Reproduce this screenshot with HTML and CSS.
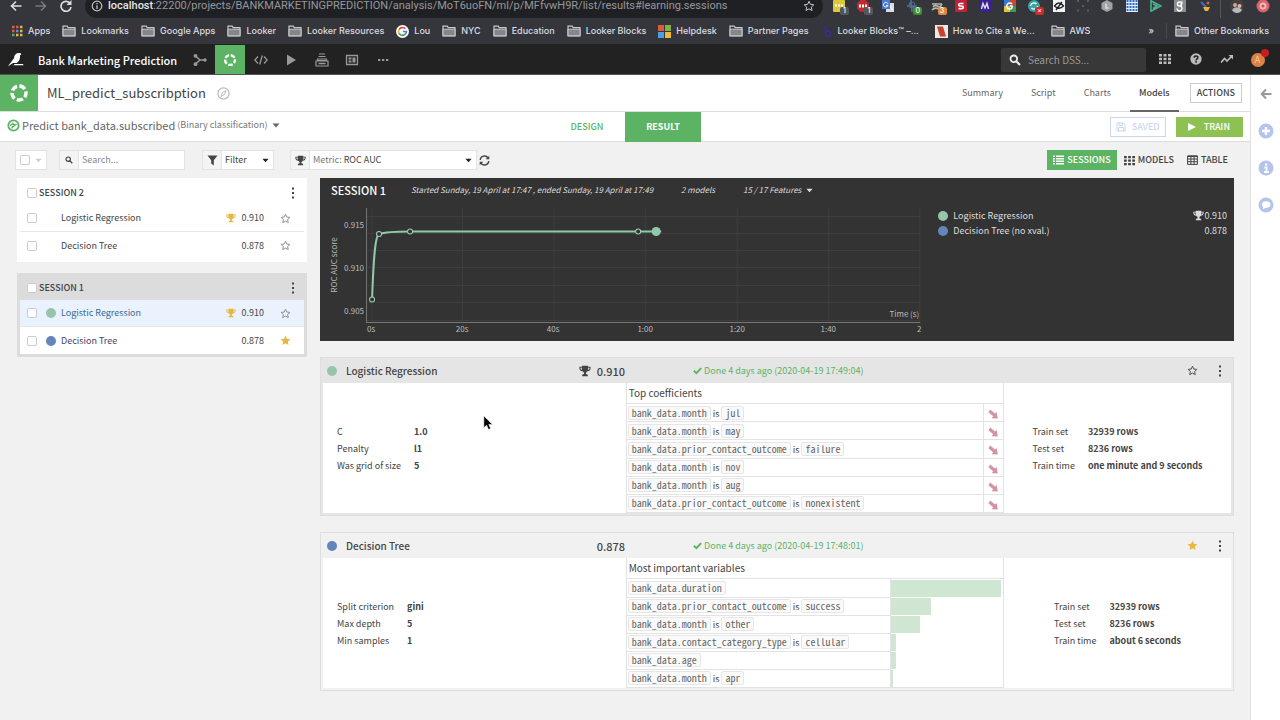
FILE: index.html
```html
<!DOCTYPE html>
<html lang="en">
  <head>
    <meta charset="UTF-8" />
    <meta name="viewport" content="width=device-width, initial-scale=1.0" />
    <title>Bank Marketing Prediction</title>

    <link rel="stylesheet" href="styles.css">
  </head>
  <body>
    <svg class="sprite" aria-hidden="true">
      <symbol id="folder" viewBox="0 0 14 12">
        <path d="M1 2.2V10.8H13V2.6H6.2L5.2 1.2H1Z" fill="none" stroke="#c9cacd" stroke-width="1.2" />
        <path d="M1 4.2H13V10.8H1Z" fill="#85868a" stroke="#c9cacd" stroke-width="1" />
      </symbol>
      <symbol id="ring" viewBox="0 0 20 20">
        <circle cx="10" cy="10" r="7" fill="none" stroke="currentColor" stroke-width="3.4" stroke-dasharray="6.4 2.4" stroke-dashoffset="2" />
      </symbol>
      <symbol id="trophy" viewBox="0 0 12 12">
        <path d="M3 .8h6v1h2.600v1.400c0 1.800-1.300 2.900-3.100 3.100-.5.7-1 1.100-1.500 1.300v1.300c1.100.1 1.900.7 1.900 1.500v.8H3.100v-.8c0-.8.800-1.400 1.900-1.500V7.600c-.5-.2-1-.6-1.500-1.300C1.700 6.100.4 5 .4 3.200V1.800H3zM3 2.800H1.500v.4c0 .8.5 1.500 1.400 1.800-.1-.6 0-1.500.1-2.200zM9 2.800c.1.7.2 1.600.1 2.200.9-.3 1.400-1 1.400-1.800v-.4z" fill="currentColor" fill-rule="evenodd" />
      </symbol>
      <symbol id="star" viewBox="0 0 12 12">
        <path d="M6 1.300 7.400 4.400 10.800 4.800 8.300 7.100 9 10.500 6 8.800 3 10.500 3.700 7.100 1.200 4.800 4.600 4.400Z" fill="none" stroke="currentColor" stroke-linejoin="round" />
      </symbol>
      <symbol id="star-full" viewBox="0 0 12 12">
        <path d="M6 .8 7.600 4.200 11.300 4.600 8.600 7.200 9.300 10.900 6 9.100 2.700 10.900 3.400 7.200.7 4.600 4.400 4.200Z" fill="currentColor" />
      </symbol>
      <symbol id="dots" viewBox="0 0 4 12">
        <path d="M1 .5h2v2H1zM1 5h2v2H1zM1 9.500h2v2H1z" fill="currentColor" />
      </symbol>
      <symbol id="caret" viewBox="0 0 8 5">
        <path d="M.5.5h7L4 4.500z" fill="currentColor" />
      </symbol>
      <symbol id="search" viewBox="0 0 12 12">
        <circle cx="4.800" cy="4.800" r="3.300" fill="none" stroke="currentColor" stroke-width="1.800" />
        <path d="M7.300 7.300 11 11" stroke="currentColor" stroke-width="2" />
      </symbol>
      <symbol id="grid" viewBox="0 0 12 12">
        <path d="M0 1h3v2.500H0zM4.500 1h3v2.500h-3zM9 1h3v2.500H9zM0 4.800h3v2.500H0zM4.500 4.800h3v2.500h-3zM9 4.800h3v2.500H9zM0 8.600h3v2.500H0zM4.500 8.600h3v2.500h-3zM9 8.600h3v2.500H9z" fill="currentColor" />
      </symbol>
      <symbol id="check" viewBox="0 0 10 10">
        <path d="M1 5.300 3.800 8 9 2.300" fill="none" stroke="currentColor" stroke-width="2.200" />
      </symbol>
      <symbol id="down" viewBox="0 0 12 12">
        <path d="M3.200 1.500 8 5.600 9.600 3.900 10.800 10.400 4.600 10.200 6.200 8.300 1.400 4.200Z" fill="currentColor" />
      </symbol>
    </svg>

    <div class="browser">
      <div class="toolbar">
        <button class="nav-btn" aria-label="Back"><svg width="12" height="12" viewBox="0 0 12 12"><path d="M11.500 6H1.500M6 1.500 1.500 6 6 10.500" fill="none" stroke="#dcdde0" stroke-width="1.600" /></svg></button>
        <button class="nav-btn" aria-label="Forward"><svg width="12" height="12" viewBox="0 0 12 12"><path d="M.5 6h10M6 1.500 10.500 6 6 10.500" fill="none" stroke="#77787c" stroke-width="1.600" /></svg></button>
        <button class="nav-btn" aria-label="Reload"><svg width="12" height="12" viewBox="0 0 12 12"><path d="M10.200 3.500A5 5 0 1 0 11 7" fill="none" stroke="#dcdde0" stroke-width="1.700" /><path d="M11.500 0v5h-5z" fill="#dcdde0" /></svg></button>
        <div class="address">
          <svg width="12" height="12" viewBox="0 0 12 12"><circle cx="6" cy="6" r="4.800" fill="none" stroke="#bfc0c3" stroke-width="1.200" /><path d="M6 3v1.300M6 5.200V9" stroke="#bfc0c3" stroke-width="1.300" /></svg>
          <span class="url"><b>localhost</b>:22200/projects/BANKMARKETINGPREDICTION/analysis/MoT6uoFN/ml/p/MFfvwH9R/list/results#learning.sessions</span>
          <svg class="fav" width="12" height="12"><use href="#star" /></svg>
        </div>
        <div class="extensions">
          <span class="ext"><svg width="12" height="12"><rect width="12" height="12" rx="1" fill="#dcc83c" /><path d="M2 5.500h8" stroke="#fff" stroke-width="2" stroke-dasharray="2 1" /></svg><i class="badge">1</i></span>
          <span class="ext"><svg width="12" height="12"><path d="M3.500 0h5L12 3.500v5L8.500 12h-5L0 8.500v-5z" fill="#c32a2e" /><path d="M2 6h8" stroke="#fff" stroke-width="3" stroke-dasharray="2 1" /></svg><i class="badge">1</i></span>
          <span class="ext"><svg width="12" height="12"><rect x="4" y="3" width="8" height="9" fill="#d9dce2" /><rect width="8" height="9" fill="#4a7bd0" /><path d="M6 3.800A2.300 2.300 0 1 0 6 5.500H4.200M8 6l3 4" fill="none" stroke="#fff" /></svg></span>
          <span class="ext"><svg width="12" height="12"><path d="M5 0 6 12M1 6h10M3 3l6 5" stroke="#4c6c98" stroke-width="1.600" /><circle cx="6" cy="5" r="3" fill="none" stroke="#4c6c98" /></svg><i class="badge badge-green">0</i></span>
          <span class="ext"><svg width="12" height="12"><path d="M1 4h10M2 7c3-5 6 4 9-3M1 10c4-4 5 0 9-2" fill="none" stroke="#b6b6ac" stroke-width="1.700" /></svg><i class="badge badge-orange">3</i></span>
          <span class="ext"><svg width="12" height="12"><rect width="12" height="12" rx="1" fill="#c12135" /><path d="M8.500 3.500H5a1.200 1.200 0 0 0 0 2.500h2a1.300 1.300 0 0 1 0 2.600H3.500" fill="none" stroke="#fff" stroke-width="1.700" /></svg></span>
          <span class="ext"><svg width="12" height="12"><rect width="12" height="12" fill="#39228c" /><path d="M2.500 9 4 3.500 6 8l2-4.500L9.500 9" fill="none" stroke="#dcd7f5" stroke-width="1.500" /></svg></span>
          <span class="ext"><svg width="12" height="12"><rect width="6" height="6" fill="#3875d7" /><rect x="6" width="6" height="6" fill="#c8453a" /><rect y="6" width="6" height="6" fill="#e6c33c" /><rect x="6" y="6" width="6" height="6" fill="#3b9b52" /><path d="M8 4a3 3 0 1 0 0 4V6H6" fill="none" stroke="#fff" stroke-width="1.500" /></svg></span>
          <span class="ext"><svg width="12" height="12"><circle cx="6" cy="6" r="6" fill="#38a3a5" /><path d="M2.500 6a3.500 3.500 0 0 1 6-2M9.500 6a3.500 3.500 0 0 1-6 2" fill="none" stroke="#e8f5f5" stroke-width="1.500" /></svg><i class="badge badge-red">×</i></span>
          <span class="ext"><svg width="12" height="12"><rect width="12" height="12" fill="#f2f2f2" /><path d="M1.500 6c3-4 6-4 9 0-3 3-6 3-9 0zM3 10l6-8" fill="none" stroke="#222" stroke-width="1.300" /></svg></span>
          <span class="ext"><svg width="12" height="12"><path d="M0 1h2M10 1h2M0 10.500h2M10 10.500h2M5 6h2" stroke="#5c5d61" stroke-width="2" /></svg></span>
          <span class="ext"><svg width="12" height="12"><path d="M6 0 11.500 3v6L6 12 .5 9V3z" fill="#a2a3a6" /><path d="M5 3.500v4.500h2.500" fill="none" stroke="#ddd" stroke-width="1.500" /></svg></span>
          <span class="ext"><svg width="12" height="12"><rect width="12" height="12" fill="#e4ebf7" /><path d="M1.500 0v12M4.500 0v12M7.500 0v12M10.500 0v12" stroke="#2f6fc6" stroke-width="2" stroke-dasharray="2 1" /></svg></span>
          <span class="ext"><svg width="12" height="12"><path d="M1 .8v10.400L11 6zM3 3.800 7 6 3 8.500" fill="none" stroke="#4db693" stroke-width="1.500" /></svg></span>
          <span class="ext"><svg width="12" height="12"><rect width="12" height="12" fill="#8b8c8e" /><circle cx="5.500" cy="4" r="2" fill="none" stroke="#fff" stroke-width="1.400" /><path d="M8 1.500 7 6.500a2.500 2.500 0 1 1-4 2" fill="none" stroke="#fff" stroke-width="1.400" /></svg></span>
          <span class="ext"><svg width="12" height="12"><path d="M2 2 7 7" stroke="#3a6fc4" stroke-width="2" /><path d="M4 7h7l-2 4H6z" fill="#e9b33b" /><circle cx="9" cy="3" r="1.500" fill="#d95b43" /></svg></span>
        </div>
        <div class="people">
          <svg width="14" height="14" viewBox="0 0 14 14"><circle cx="7" cy="7" r="7" fill="#463e3d" /><circle cx="5" cy="6" r="2" fill="#cfa997" /><circle cx="9.500" cy="7" r="2" fill="#d5b7a9" /><path d="M2 11c3-4 7-3 10 0-2 4-8 4-10 0z" fill="#b9b9bd" /></svg>
          <svg width="14" height="14" viewBox="0 0 14 14"><circle cx="7" cy="7" r="6.500" fill="#d9646b" /><circle cx="7" cy="7" r="3.500" fill="#f0b9b8" /><circle cx="7" cy="7" r="1.500" fill="#c94f58" /></svg>
        </div>
      </div>

      <div class="bookmarks">
        <a href="#"><svg width="12" height="12" viewBox="0 0 12 12"><path d="M1 2h2.500M1 6h2.500" stroke="#e15b4b" stroke-width="2.500" /><path d="M5 2h2.500" stroke="#e15b4b" stroke-width="2.500" /><path d="M9 2h2.500M9 6h2.500M5 10h2.500M9 10h2.500" stroke="#e1b64b" stroke-width="2.500" /><path d="M5 6h2.500" stroke="#5a8ede" stroke-width="2.500" /><path d="M1 10h2.500" stroke="#58a862" stroke-width="2.500" /></svg>Apps</a>
        <a href="#"><svg width="14" height="12"><use href="#folder" /></svg>Lookmarks</a>
        <a href="#"><svg width="14" height="12"><use href="#folder" /></svg>Google Apps</a>
        <a href="#"><svg width="14" height="12"><use href="#folder" /></svg>Looker</a>
        <a href="#"><svg width="14" height="12"><use href="#folder" /></svg>Looker Resources</a>
        <a href="#"><svg width="13" height="13" viewBox="0 0 13 13"><circle cx="6.500" cy="6.500" r="6.500" fill="#fff" /><path d="M9.300 3.700A4 4 0 0 0 3 4.600" fill="none" stroke="#de4b3c" stroke-width="1.600" /><path d="M3 4.600a4 4 0 0 0 0 3.800" fill="none" stroke="#f0b82c" stroke-width="1.600" /><path d="M3 8.400a4 4 0 0 0 6.200.8" fill="none" stroke="#3a9c55" stroke-width="1.600" /><path d="M9.200 9.200A4 4 0 0 0 10.400 6.500H6.800" fill="none" stroke="#4580e6" stroke-width="1.600" /></svg>Lou</a>
        <a href="#"><svg width="14" height="12"><use href="#folder" /></svg>NYC</a>
        <a href="#"><svg width="14" height="12"><use href="#folder" /></svg>Education</a>
        <a href="#"><svg width="14" height="12"><use href="#folder" /></svg>Looker Blocks</a>
        <a href="#"><svg width="13" height="13" viewBox="0 0 13 13"><path d="M0 0h6v6H0z" fill="#e0593a" /><path d="M7 0h6v6H7z" fill="#82b440" /><path d="M0 7h6v6H0z" fill="#4a9fdc" /><path d="M7 7h6v6H7z" fill="#edb93f" /></svg>Helpdesk</a>
        <a href="#"><svg width="14" height="12"><use href="#folder" /></svg>Partner Pages</a>
        <a href="#" class="clipped"><svg width="12" height="12" viewBox="0 0 12 12"><circle cx="7" cy="8.500" r="2.600" fill="none" stroke="#3d2c92" stroke-width="1.500" /><circle cx="4" cy="4" r="1.500" fill="none" stroke="#3d2c92" /><circle cx="2" cy="1.200" r="1" fill="#3d2c92" /></svg>Looker Blocks™ –...</a>
        <a href="#" class="clipped"><svg width="13" height="13" viewBox="0 0 13 13"><rect width="13" height="13" fill="#efe9e4" /><path d="M2 1.500h6l3 10H5z" fill="#c5432f" /></svg>How to Cite a We...</a>
        <a href="#"><svg width="14" height="12"><use href="#folder" /></svg>AWS</a>
        <a href="#" class="more">»</a>
        <a href="#" class="other"><svg width="14" height="12"><use href="#folder" /></svg>Other Bookmarks</a>
      </div>
    </div>

    <header class="navbar">
      <svg width="18" height="16" viewBox="0 0 18 16"><path d="M.8 14.500 7 6.200C7.200 3 9 1 12 1c1.300 0 2 .5 2.400 1.200L13 3.600c.4 3.200-.8 5.800-3.200 7.400H6zM7.500 12h8.500l.5 1.200H6.500z" fill="#fff" /></svg>
      <a href="#" class="project">Bank Marketing Prediction</a>
      <nav class="sections">
        <button aria-label="Flow"><svg width="14" height="14" viewBox="0 0 14 14"><path d="M2.500 3 7 7H12M2.500 11 7 7" fill="none" stroke="currentColor" stroke-width="1.600" /><circle cx="2.500" cy="2.800" r="1.900" fill="currentColor" /><circle cx="2.500" cy="11.200" r="1.900" fill="currentColor" /><circle cx="12" cy="7" r="1.700" fill="currentColor" /></svg></button>
        <button class="current" aria-label="Lab"><svg width="14" height="14"><use href="#ring" /></svg></button>
        <button aria-label="Code"><svg width="14" height="14" viewBox="0 0 14 14"><path d="M4 3.500.8 7 4 10.500M10 3.500 13.200 7 10 10.500M8.300 2.500 5.700 11.500" fill="none" stroke="currentColor" stroke-width="1.300" /></svg></button>
        <button aria-label="Run"><svg width="14" height="14" viewBox="0 0 14 14"><path d="M3 1.500v11L12 7z" fill="currentColor" /></svg></button>
        <button aria-label="Automation"><svg width="14" height="14" viewBox="0 0 14 14"><path d="M4 1h6M3.500 3.500h7M2.500 6h9v1.500h-9zM1 8h12v5H1z" fill="none" stroke="currentColor" stroke-width="1.200" /><path d="M3.500 10.500h7" stroke="currentColor" stroke-width="1.500" /></svg></button>
        <button aria-label="Dashboards"><svg width="14" height="14" viewBox="0 0 14 14"><path d="M1.500 2.500h11v9h-11z" fill="none" stroke="currentColor" stroke-width="1.300" /><path d="M3.500 4.500h3v2h-3zM3.500 7.500h3v2h-3zM7.500 4.500h3v5h-3z" fill="currentColor" /></svg></button>
        <button aria-label="More"><svg width="14" height="14" viewBox="0 0 14 14"><path d="M2 6h2.300v2H2zM6 6h2.300v2H6zM10 6h2.300v2H10z" fill="currentColor" /></svg></button>
      </nav>
      <label class="dss-search"><svg width="12" height="12"><use href="#search" /></svg><input type="search" placeholder="Search DSS..." /></label>
      <div class="account">
        <button aria-label="Applications"><svg width="12" height="12"><use href="#grid" /></svg></button>
        <button aria-label="Help"><svg width="12" height="12" viewBox="0 0 12 12"><circle cx="6" cy="6" r="5.700" fill="currentColor" /><path d="M4.200 4.700C4.200 2.500 7.900 2.500 7.900 4.600 7.900 6 6.100 5.900 6.100 7.400" fill="none" stroke="#222" stroke-width="1.500" /><path d="M5.300 8.300h1.600v1.500H5.300z" fill="#222" /></svg></button>
        <button aria-label="Activity"><svg width="14" height="12" viewBox="0 0 14 12"><path d="M1 9.500 4.500 5.500 7 8 11.500 3.500" fill="none" stroke="currentColor" stroke-width="1.700" /><path d="M8.500 2H13v4.500z" fill="currentColor" /></svg></button>
        <button class="avatar" aria-label="Profile"><span>A</span></button>
      </div>
    </header>

    <div class="page">
      <main>
        <div class="titlebar">
          <span class="analysis-icon"><svg width="20" height="20"><use href="#ring" /></svg></span>
          <h1>ML_predict_subscribption</h1>
          <svg width="13" height="13" viewBox="0 0 13 13"><circle cx="6.500" cy="6.500" r="5.600" fill="none" stroke="#bbb" stroke-width="1.200" /><path d="M9 3.500 7.500 7.500 4 9.500 5.500 5.500z" fill="none" stroke="#bbb" /></svg>
          <nav class="tabs">
            <a href="#">Summary</a>
            <a href="#">Script</a>
            <a href="#">Charts</a>
            <a href="#" class="active">Models</a>
          </nav>
          <button class="actions">ACTIONS</button>
        </div>

        <div class="taskbar">
          <button class="task">
            <svg width="13" height="13" viewBox="0 0 13 13"><circle cx="6.500" cy="6.500" r="5.200" fill="none" stroke="#5cb364" stroke-width="1.800" /><path d="M3.500 7a2 2 0 0 1 3-1.500c1 .8 2 .5 3-.5M5 9.500c0-2 1-2.500 2.500-2.500M6 3.500c-.3 1.500.5 2 1.500 2" fill="none" stroke="#5cb364" stroke-width="1.300" /></svg>
            Predict bank_data.subscribed <small>(Binary classification)</small>
            <svg class="task-caret" width="8" height="5"><use href="#caret" /></svg>
          </button>
          <div class="switch">
            <button>DESIGN</button>
            <button class="active">RESULT</button>
          </div>
          <div class="task-buttons">
            <button class="saved" disabled><svg width="10" height="10" viewBox="0 0 10 10"><path d="M1 1h6.500L9 2.500V9H1zM3 1v2.500h3.500V1M2.500 9V5.500h5V9" fill="none" stroke="currentColor" /></svg>SAVED</button>
            <button class="train"><svg width="8" height="8" viewBox="0 0 8 8"><path d="M0 0v8l8-4z" fill="currentColor" /></svg>TRAIN</button>
          </div>
        </div>

        <div class="content">
          <div class="filters">
            <label class="box select-all"><input type="checkbox" aria-label="Select all" /><svg width="7" height="5"><use href="#caret" /></svg></label>
            <label class="box find"><span class="addon"><svg width="8" height="8"><use href="#search" /></svg></span><input type="search" placeholder="Search..." /></label>
            <button class="box filter"><span class="addon"><svg width="11" height="11" viewBox="0 0 11 11"><path d="M.5.500h10L6.800 5.200v5.300L4.200 8.500V5.200z" fill="#444" /></svg></span>Filter<svg class="end" width="7" height="5"><use href="#caret" /></svg></button>
            <label class="box metric"><span class="addon"><svg width="11" height="11"><use href="#trophy" /></svg></span>
              <span class="metric-name">Metric:</span>
              <select aria-label="Metric"><option>ROC AUC</option><option>Accuracy</option></select>
              <svg class="end" width="7" height="5"><use href="#caret" /></svg></label>
            <button class="refresh" aria-label="Refresh"><svg width="11" height="11" viewBox="0 0 11 11"><path d="M1.200 4.800a4.300 4.300 0 0 1 7.800-2M9.800 6.200a4.300 4.300 0 0 1-7.800 2" fill="none" stroke="#444" stroke-width="1.400" /><path d="M10.300.7v3.600H6.700zM.7 10.300V6.700h3.600z" fill="#444" /></svg></button>
            <div class="views">
              <button class="active"><svg width="11" height="10" viewBox="0 0 11 10"><path d="M0 1.200h2M0 3.700h2M0 6.200h2M0 8.700h2M3 1.200h8M3 3.700h8M3 6.200h8M3 8.700h8" stroke="currentColor" stroke-width="1.500" /></svg>SESSIONS</button>
              <button><svg width="11" height="11"><use href="#grid" /></svg>MODELS</button>
              <button><svg width="11" height="10" viewBox="0 0 11 10"><path d="M.600 1h9.800v8.400H.600zM.600 4h9.800M.600 6.700h9.800M3.900 1v8.400M7.100 1v8.400" fill="none" stroke="currentColor" /><path d="M.600.500h9.800v1.500H.600z" fill="currentColor" /></svg>TABLE</button>
            </div>
          </div>

          <div class="columns">
            <aside class="sessions">
              <section class="session">
                <div class="session-head"><label><input type="checkbox" />SESSION 2</label><svg width="4" height="12"><use href="#dots" /></svg></div>
                <div class="row"><input type="checkbox" aria-label="Select Logistic Regression" /><i class="dot none"></i><a href="#">Logistic Regression</a><svg class="gold" width="10" height="10"><use href="#trophy" /></svg><span>0.910</span><svg class="fave" width="11" height="11"><use href="#star" /></svg></div>
                <div class="row"><input type="checkbox" aria-label="Select Decision Tree" /><i class="dot none"></i><a href="#">Decision Tree</a><span>0.878</span><svg class="fave" width="11" height="11"><use href="#star" /></svg></div>
              </section>
              <section class="session open">
                <div class="session-head"><label><input type="checkbox" />SESSION 1</label><svg width="4" height="12"><use href="#dots" /></svg></div>
                <div class="row selected"><input type="checkbox" aria-label="Select Logistic Regression" /><i class="dot"></i><a href="#">Logistic Regression</a><svg class="gold" width="10" height="10"><use href="#trophy" /></svg><span>0.910</span><svg class="fave" width="11" height="11"><use href="#star" /></svg></div>
                <div class="row"><input type="checkbox" aria-label="Select Decision Tree" /><i class="dot blue"></i><a href="#">Decision Tree</a><span>0.878</span><svg class="fave gold" width="11" height="11"><use href="#star-full" /></svg></div>
              </section>
            </aside>

            <div class="results">
              <section class="summary">
                <div class="summary-head">
                  <h2>SESSION 1</h2>
                  <em class="dates">Started Sunday, 19 April at 17:47 , ended Sunday, 19 April at 17:49</em>
                  <em>2 models</em>
                  <button><em>15 / 17 Features</em><svg width="7" height="5"><use href="#caret" /></svg></button>
                </div>
                <div class="summary-body">
                  <svg class="chart" viewBox="0 0 609 141">
                    <path class="gridline" d="M52 8v114M142.500 8v114M234 8v114M325.500 8v114M417 8v114M508.500 8v114M599.500 8v114M47 16.500h553M47 33.500h553M47 50.500h553M47 67.500h553M47 85.500h553M47 102.500h553M47 120.500h553" />
                    <path class="axis" d="M46.500 8v114.500H600" />
                    <g class="ticks">
                      <text x="44" y="28" text-anchor="end">0.915</text>
                      <text x="44" y="71" text-anchor="end">0.910</text>
                      <text x="44" y="114" text-anchor="end">0.905</text>
                      <text x="51" y="132" text-anchor="middle">0s</text>
                      <text x="142" y="132" text-anchor="middle">20s</text>
                      <text x="233" y="132" text-anchor="middle">40s</text>
                      <text x="325" y="132" text-anchor="middle">1:00</text>
                      <text x="417" y="132" text-anchor="middle">1:20</text>
                      <text x="508" y="132" text-anchor="middle">1:40</text>
                      <text x="599" y="132" text-anchor="middle">2</text>
                      <text x="599" y="117" text-anchor="end">Time (s)</text>
                      <text transform="translate(17 65) rotate(-90)" text-anchor="middle">ROC AUC score</text>
                    </g>
                    <path class="curve" d="M52 99.500C53 75 54 36 59 34 65 32 80 31.500 90 31.500H341" />
                    <g class="points"><circle cx="52" cy="99.500" r="2.500" /><circle cx="59" cy="34" r="2.500" /><circle cx="90" cy="31.500" r="2.500" /><circle cx="318" cy="31.500" r="2.500" /></g>
                    <circle class="last" cx="336" cy="31.500" r="4.500" />
                  </svg>
                  <ul class="legend">
                    <li><i class="dot"></i>Logistic Regression<span><svg width="11" height="11"><use href="#trophy" /></svg>0.910</span></li>
                    <li><i class="dot blue"></i>Decision Tree (no xval.)<span>0.878</span></li>
                  </ul>
                </div>
              </section>

              <article class="model hovered">
                <div class="model-head">
                  <div class="name"><i class="dot"></i><h3>Logistic Regression</h3><svg width="12" height="12"><use href="#trophy" /></svg><b>0.910</b></div>
                  <p class="status"><svg width="9" height="9"><use href="#check" /></svg>Done 4 days ago (2020-04-19 17:49:04)</p>
                  <div class="model-tools"><svg width="11" height="11"><use href="#star" /></svg><svg width="4" height="12"><use href="#dots" /></svg></div>
                </div>
                <div class="model-body">
                  <dl><dt>C</dt><dd>1.0</dd><dt>Penalty</dt><dd>l1</dd><dt>Was grid of size</dt><dd>5</dd></dl>
                  <table class="coefs">
                    <caption>Top coefficients</caption>
                    <tr><td><code>bank_data.month</code> is <code>jul</code></td><td><svg width="12" height="12"><use href="#down" /></svg></td></tr>
                    <tr><td><code>bank_data.month</code> is <code>may</code></td><td><svg width="12" height="12"><use href="#down" /></svg></td></tr>
                    <tr><td><code>bank_data.prior_contact_outcome</code> is <code>failure</code></td><td><svg width="12" height="12"><use href="#down" /></svg></td></tr>
                    <tr><td><code>bank_data.month</code> is <code>nov</code></td><td><svg width="12" height="12"><use href="#down" /></svg></td></tr>
                    <tr><td><code>bank_data.month</code> is <code>aug</code></td><td><svg width="12" height="12"><use href="#down" /></svg></td></tr>
                    <tr><td><code>bank_data.prior_contact_outcome</code> is <code>nonexistent</code></td><td><svg width="12" height="12"><use href="#down" /></svg></td></tr>
                  </table>
                  <dl class="training"><dt>Train set</dt><dd>32939 rows</dd><dt>Test set</dt><dd>8236 rows</dd><dt>Train time</dt><dd>one minute and 9 seconds</dd></dl>
                </div>
                <svg class="pointer" width="10" height="16" viewBox="0 0 10 16"><path d="M.8.800v12l2.800-2.600 1.900 4.300 2.200-1-1.900-4.100h3.700z" fill="#000" stroke="#fff" stroke-width=".6" /></svg>
              </article>

              <article class="model">
                <div class="model-head">
                  <div class="name"><i class="dot blue"></i><h3>Decision Tree</h3><b>0.878</b></div>
                  <p class="status"><svg width="9" height="9"><use href="#check" /></svg>Done 4 days ago (2020-04-19 17:48:01)</p>
                  <div class="model-tools"><svg class="gold" width="11" height="11"><use href="#star-full" /></svg><svg width="4" height="12"><use href="#dots" /></svg></div>
                </div>
                <div class="model-body">
                  <dl><dt>Split criterion</dt><dd>gini</dd><dt>Max depth</dt><dd>5</dd><dt>Min samples</dt><dd>1</dd></dl>
                  <table class="variables">
                    <caption>Most important variables</caption>
                    <tr><td><code>bank_data.duration</code></td><td><div class="bar" style="width: 98%"></div></td></tr>
                    <tr><td><code>bank_data.prior_contact_outcome</code> is <code>success</code></td><td><div class="bar" style="width: 36%"></div></td></tr>
                    <tr><td><code>bank_data.month</code> is <code>other</code></td><td><div class="bar" style="width: 26%"></div></td></tr>
                    <tr><td><code>bank_data.contact_category_type</code> is <code>cellular</code></td><td><div class="bar" style="width: 5%"></div></td></tr>
                    <tr><td><code>bank_data.age</code></td><td><div class="bar" style="width: 5%"></div></td></tr>
                    <tr><td><code>bank_data.month</code> is <code>apr</code></td><td><div class="bar" style="width: 2%"></div></td></tr>
                  </table>
                  <dl class="training"><dt>Train set</dt><dd>32939 rows</dd><dt>Test set</dt><dd>8236 rows</dd><dt>Train time</dt><dd>about 6 seconds</dd></dl>
                </div>
              </article>
            </div>
          </div>
        </div>
      </main>

      <div class="rail">
        <button aria-label="Open panel"><svg width="12" height="12" viewBox="0 0 12 12"><path d="M11.500 6H2M6 1.500 1.700 6 6 10.500" fill="none" stroke="#999" stroke-width="2" /></svg></button>
        <button aria-label="Add"><svg width="16" height="16" viewBox="0 0 16 16"><circle cx="8" cy="8" r="7.500" fill="#b5c4ee" /><path d="M8 4v8M4 8h8" stroke="#fff" stroke-width="2.400" /></svg></button>
        <button aria-label="Details"><svg width="16" height="16" viewBox="0 0 16 16"><circle cx="8" cy="8" r="7.500" fill="#b5c4ee" /><path d="M6.500 7.500H8.500V12M6 12h5" fill="none" stroke="#fff" stroke-width="1.800" /><circle cx="8.200" cy="4.500" r="1.300" fill="#fff" /></svg></button>
        <button aria-label="Discussions"><svg width="16" height="16" viewBox="0 0 16 16"><circle cx="8" cy="8" r="7.500" fill="#b5c4ee" /><ellipse cx="8.200" cy="7.500" rx="4.200" ry="3.200" fill="#fff" /><path d="M5 9v3.500L8.500 10z" fill="#fff" /></svg></button>
      </div>
    </div>
  </body>
</html>
```
FILE: styles.css
```css
* {
  margin: 0;
  padding: 0;
  box-sizing: border-box;
}

body {
  font-family: "Noto Sans CJK SC", "Open Sans", sans-serif;
  font-size: 9px;
  line-height: 16px;
  color: #444;
  background-color: #f1f1f1;
  min-height: 100vh;
  display: flex;
  flex-direction: column;
}

button,
input,
select {
  font: inherit;
  color: inherit;
  background: none;
  border: none;
  outline: none;
}

button {
  cursor: pointer;
}

a {
  color: inherit;
  text-decoration: none;
}

svg {
  flex: none;
  display: block;
}

.sprite {
  position: absolute;
  width: 0;
  height: 0;
}

input[type="search"] {
  appearance: none;
  width: 100%;
  min-width: 0;
}

input[type="checkbox"] {
  appearance: none;
  flex: none;
  width: 10px;
  height: 10px;
  border: 1px solid #ccc;
  border-radius: 2px;
  background-color: #fff;
}

.gold {
  color: #e6b840;
}

.dot {
  flex: none;
  width: 10px;
  height: 10px;
  border-radius: 50%;
  background-color: #98c4ae;
}

.dot.blue {
  background-color: #6585ba;
}

.dot.none {
  background-color: transparent;
}

/* browser window */

.browser {
  background-color: #35363b;
  color: #dcdde0;
}

.toolbar {
  height: 18px;
  display: flex;
  align-items: flex-end;
  padding-left: 10px;
}

.toolbar > * {
  flex: none;
  height: 24px;
  display: flex;
  align-items: center;
}

.nav-btn {
  width: 25px;
}

.address {
  width: 738px;
  padding: 0 8px 0 6px;
  gap: 5px;
  border-radius: 12px;
  background-color: #1f2024;
  font-family: Roboto, sans-serif;
  font-size: 11px;
  color: #96979a;
}

.url b {
  font-weight: 500;
  color: #e4e4e6;
}

.fav {
  margin-left: auto;
  color: #c5c6c9;
}

.extensions {
  flex: 1;
  justify-content: space-between;
  padding: 0 9px 0 10px;
}

.ext {
  position: relative;
}

.badge {
  position: absolute;
  left: 7px;
  top: 7px;
  width: 9px;
  height: 8px;
  border-radius: 2px;
  background-color: #55565a;
  color: #fff;
  font: 500 7px/8px Inter, sans-serif;
  text-align: center;
}

.badge-green {
  background-color: #3f8f2e;
}

.badge-orange {
  background-color: #d98a3a;
}

.badge-red {
  background-color: #d02a2a;
}

.people {
  gap: 12px;
  padding: 0 10px 0 9px;
  border-left: 1px solid #55565a;
}

.bookmarks {
  height: 26px;
  display: flex;
  align-items: center;
  gap: 12px;
  padding: 0 11px;
  font-family: Inter, sans-serif;
  font-weight: 500;
}

.bookmarks a {
  display: flex;
  align-items: center;
  gap: 5px;
  white-space: nowrap;
}

.bookmarks .clipped {
  padding-right: 4px;
}

.bookmarks .more {
  margin-left: auto;
}

.bookmarks .other {
  padding-left: 8px;
  border-left: 1px solid #4a4b50;
}

/* top navigation */

.navbar {
  height: 31px;
  display: flex;
  align-items: center;
  padding: 1px 7px 0;
  background-color: #222;
  border-bottom: 1px solid #555;
  color: #999;
}

.project {
  margin: 0 7px 0 13px;
  font-size: 11px;
  font-weight: 500;
  color: #fff;
}

.sections {
  display: flex;
  align-self: stretch;
  width: 214px;
}

.sections button {
  flex: 1;
  display: flex;
  align-items: center;
  justify-content: center;
}

.sections .current {
  background-color: #5cb364;
  color: #fff;
}

.dss-search {
  width: 145px;
  height: 24px;
  margin-left: auto;
  display: flex;
  align-items: center;
  gap: 7px;
  padding: 0 8px;
  border-radius: 2px;
  background-color: #383838;
  color: #eee;
  font-size: 10px;
}

.dss-search input::placeholder {
  color: #999;
}

.account {
  display: flex;
  margin-left: 3px;
  color: #bbb;
}

.account button {
  width: 31px;
  display: flex;
  justify-content: center;
}

.avatar span {
  position: relative;
  width: 14px;
  height: 14px;
  border-radius: 50%;
  background-color: #dd8244;
  color: #f7c9a4;
  line-height: 14px;
}

.avatar span::after {
  content: "";
  position: absolute;
  top: -4px;
  right: -4px;
  width: 8px;
  height: 8px;
  border-radius: 50%;
  background-color: #c41e1e;
}

/* page */

.page {
  flex: 1;
  display: flex;
}

main {
  flex: 1;
  min-width: 0;
  display: flex;
  flex-direction: column;
}

.rail {
  width: 30px;
  padding: 11px 0;
  display: flex;
  flex-direction: column;
  align-items: center;
  gap: 21px;
  border-left: 1px solid #e2e2e6;
  background-color: #fff;
}

.rail button {
  height: 16px;
  display: flex;
  align-items: center;
}

.titlebar {
  height: 37px;
  display: flex;
  align-items: center;
  gap: 11px;
  padding-right: 8px;
  background-color: #fff;
  border-bottom: 1px solid #ddd;
}

.analysis-icon {
  align-self: stretch;
  width: 38px;
  display: flex;
  align-items: center;
  justify-content: center;
  background-color: #5cb364;
  color: #fff;
}

h1 {
  font-size: 13px;
  font-weight: 400;
  margin-left: -2px;
}

.tabs {
  align-self: stretch;
  margin: 0 0 -1px auto;
  display: flex;
  gap: 10px;
}

.tabs a {
  padding: 0 9px;
  line-height: 36px;
  color: #666;
  border-bottom: 2px solid transparent;
}

.tabs .active {
  font-weight: 500;
  color: #444;
  border-color: #666;
}

.actions {
  height: 20px;
  padding: 0 6px;
  border: 1px solid #ccc;
  font-weight: 500;
  line-height: 18px;
}

.taskbar {
  height: 30px;
  display: grid;
  grid-template-columns: 1fr auto 1fr;
  padding: 0 7px;
  background-color: #fff;
  border-bottom: 1px solid #ddd;
}

.task {
  justify-self: start;
  display: flex;
  align-items: center;
  gap: 2px;
  padding-bottom: 3px;
  font-size: 11px;
  color: #666;
  white-space: nowrap;
}

.task small {
  font-size: 9px;
  color: #777;
}

.task-caret {
  margin-left: 2px;
}

.switch {
  display: flex;
  margin-bottom: -1px;
}

.switch button {
  width: 76px;
  font-weight: 500;
  color: #5cb364;
}

.switch .active {
  background-color: #5cb364;
  color: #fff;
  font-weight: 700;
}

.task-buttons {
  justify-self: end;
  display: flex;
  align-items: center;
  gap: 10px;
}

.task-buttons button {
  height: 20px;
  display: flex;
  align-items: center;
  border: 1px solid #8dc252;
  font-weight: 500;
}

.task-buttons .saved {
  gap: 6px;
  padding: 0 5px;
  border-color: #c9d6f2;
  color: #c9d6f2;
}

.task-buttons .train {
  gap: 8px;
  padding: 0 12px 0 11px;
  background-color: #8dc252;
  color: #fff;
}

.content {
  flex: 1;
  padding: 8px 16px 24px 17px;
}

.filters {
  display: flex;
  align-items: center;
  margin: 0 0 8px -2px;
}

.box {
  height: 20px;
  display: flex;
  align-items: center;
  background-color: #fff;
  border: 1px solid #e3e3e3;
}

.addon {
  align-self: stretch;
  flex: none;
  width: 19px;
  margin-right: 3px;
  display: flex;
  align-items: center;
  justify-content: center;
  background-color: #f4f4f4;
  border-right: 1px solid #e3e3e3;
}

.end {
  margin: 0 4px 0 auto;
  color: #222;
}

.select-all {
  width: 32px;
  padding: 0 4px;
  justify-content: space-between;
  color: #ccc;
}

.find {
  width: 126px;
  margin-left: 12px;
}

.find input::placeholder {
  color: #888;
}

.filter {
  width: 72px;
  margin-left: 17px;
}

.metric {
  width: 187px;
  margin-left: 16px;
}

.metric-name {
  color: #777;
}

.metric select {
  flex: 1;
  appearance: none;
  padding-left: 2px;
}

.refresh {
  margin-left: 2px;
}

.views {
  display: flex;
  gap: 1px;
  margin-left: auto;
}

.views button {
  height: 20px;
  display: flex;
  align-items: center;
  gap: 3px;
  padding: 0 6px;
  font-weight: 500;
}

.views .active {
  background-color: #5cb364;
  color: #fff;
}

.columns {
  display: flex;
  align-items: flex-start;
  gap: 13px;
}

/* session list */

.sessions {
  width: 290px;
  flex: none;
  display: flex;
  flex-direction: column;
  gap: 11px;
}

.session {
  padding: 0 3px 3px;
  background-color: #fff;
}

.session.open {
  background-color: #dcdcdc;
}

.session-head {
  height: 27px;
  display: flex;
  align-items: center;
  justify-content: space-between;
  padding: 3px 9px 0 7px;
}

.session-head label {
  display: flex;
  align-items: center;
  gap: 2px;
  font-weight: 500;
}

.row {
  height: 27px;
  display: flex;
  align-items: center;
  padding: 0 13px 0 7px;
  background-color: #fff;
  border-bottom: 1px solid #e6e6e6;
}

.row:last-child {
  border-bottom: none;
}

.row .dot {
  margin: 0 5px 0 9px;
}

.row a {
  margin-right: auto;
}

.row span {
  margin: 0 16px 0 6px;
}

.open .row a {
  color: #446;
}

.fave {
  color: #888;
}

.fave.gold {
  color: #e6b840;
}

.row.selected {
  background-color: #eaf2fd;
}

.open .selected a {
  color: #3b6a98;
}

/* session summary */

.results {
  flex: 1;
  min-width: 0;
  display: flex;
  flex-direction: column;
  gap: 16px;
}

.summary {
  background-color: #333;
  color: #ddd;
}

.summary-head {
  height: 22px;
  display: flex;
  align-items: center;
  padding: 2px 11px 0;
  gap: 28px;
  font-size: 8px;
}

.summary-head button {
  display: flex;
  align-items: center;
  gap: 5px;
}

.dates {
  white-space: nowrap;
}

h2 {
  font-size: 11px;
  font-weight: 500;
  color: #fff;
  margin-right: -3px;
}

.summary-body {
  display: grid;
  grid-template-columns: 2fr 1fr;
}

.chart {
  width: 100%;
}

.gridline {
  stroke: #3e3e3e;
}

.axis {
  fill: none;
  stroke: #777;
}

.ticks {
  fill: #bbb;
  font-size: 8px;
}

.curve {
  fill: none;
  stroke: #90c9ab;
  stroke-width: 2;
}

.points {
  fill: #333;
  stroke: #a5ccb8;
}

.last {
  fill: #90c9ab;
}

.legend {
  list-style: none;
  padding: 8px 7px 0 9px;
  line-height: 15px;
}

.legend li {
  display: flex;
  align-items: center;
  gap: 5px;
}

.legend span {
  margin-left: auto;
  display: flex;
  align-items: center;
  gap: 1px;
}

/* model cards */

.model {
  position: relative;
  background-color: #f1f1f1;
  border: 1px solid #dedede;
}

.model.hovered {
  background-color: #e5e5e5;
}

.model-head,
.model-body {
  display: grid;
  grid-template-columns: 4fr 5fr 3fr;
}

.model-head {
  height: 25px;
  align-items: center;
}

.name {
  display: flex;
  align-items: center;
  padding-left: 6px;
}

.name svg {
  margin-left: auto;
}

h3 {
  margin-left: 9px;
  font-size: 10px;
  font-weight: 500;
}

.name b {
  margin-left: 6px;
  font-size: 11px;
  font-weight: 500;
}

.name h3 + b {
  margin-left: auto;
}

.status {
  display: flex;
  align-items: center;
  gap: 2px;
  padding-left: 68px;
  color: #5cb364;
}

.model-tools {
  display: flex;
  align-items: center;
  justify-content: flex-end;
  gap: 20px;
  padding-right: 11px;
}

.model-body {
  height: 130px;
  margin: 0 2px 2px;
  background-color: #fff;
}

dl {
  align-self: center;
  display: grid;
  grid-template-columns: auto auto;
  justify-content: start;
  column-gap: 13px;
  padding-left: 14px;
  line-height: 17px;
}

dl.training {
  justify-content: center;
  padding: 0;
}

dd {
  font-weight: 700;
}

table {
  width: 100%;
  height: 110px;
  border-collapse: collapse;
  border: 1px solid #e3e3e3;
}

caption {
  padding: 2px;
  border: 1px solid #e3e3e3;
  border-width: 0 1px;
  font-size: 10px;
  line-height: 16px;
  text-align: left;
}

td {
  border: 1px solid #e3e3e3;
  line-height: 12px;
}

td:first-child {
  padding-left: 1px;
}

code {
  display: inline-block;
  padding: 0 3px;
  border: 1px solid #e6e6e6;
  border-radius: 2px;
  background-color: #fafafa;
  font-family: "Noto Sans Mono CJK SC", "Liberation Mono", monospace;
  font-size: 10px;
  color: #666;
}

.coefs td:last-child {
  width: 20px;
  padding: 3px 3px 0;
  color: #d394a0;
}

.variables td:last-child {
  width: 30%;
  border: none;
}

.bar {
  height: 17px;
  background-color: #cfe6d2;
}

.pointer {
  position: absolute;
  left: 162px;
  top: 57px;
}
```
